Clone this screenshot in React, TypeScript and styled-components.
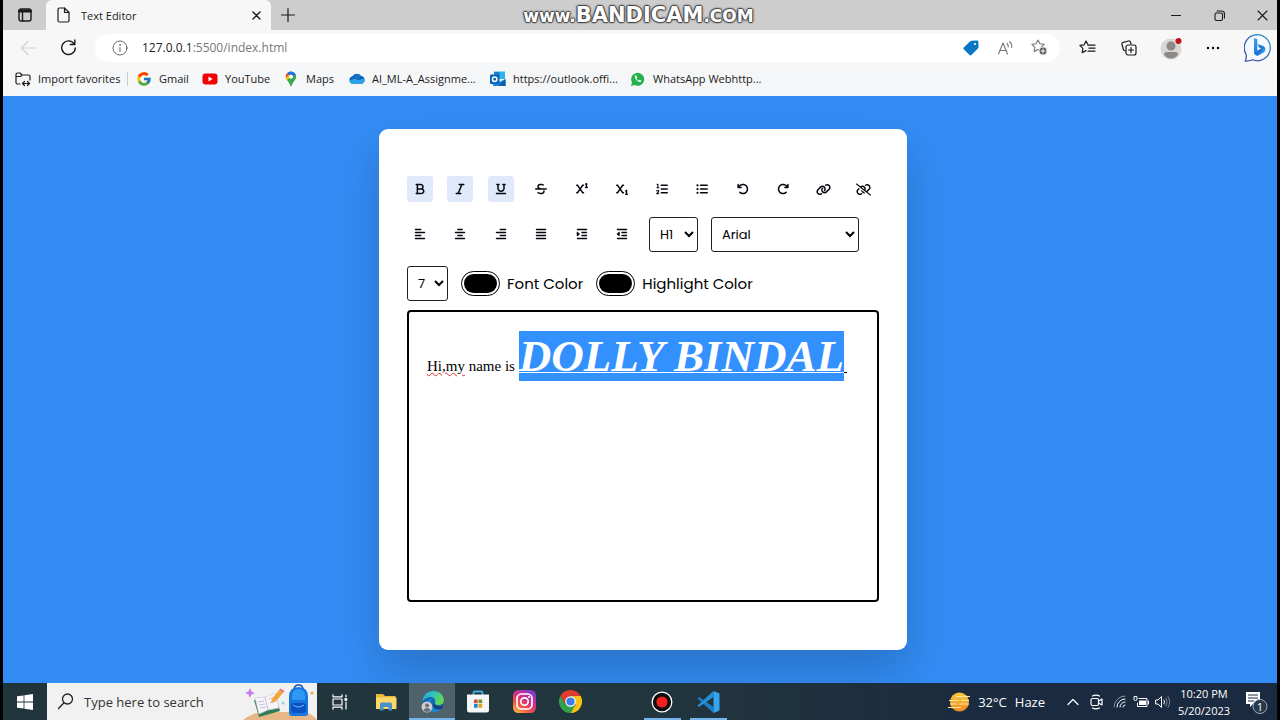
import React from "react";
import styled, { createGlobalStyle } from "styled-components";
import {
  FaBold, FaItalic, FaUnderline, FaStrikethrough, FaSuperscript, FaSubscript,
  FaListOl, FaListUl, FaArrowRotateLeft, FaArrowRotateRight, FaLink, FaLinkSlash,
  FaAlignLeft, FaAlignCenter, FaAlignRight, FaAlignJustify, FaIndent, FaOutdent,
} from "react-icons/fa6";
import { FcGoogle } from "react-icons/fc";

const ui = `"Open Sans", "Noto Sans", sans-serif`;
const rounded = `Poppins, Lato, "Open Sans", sans-serif`;

const Global = createGlobalStyle`
  *, *::before, *::after { box-sizing: border-box; }
  body { margin: 0; background: #000; font-family: ${ui}; color: #1b1b1b; }
  button { border: 0; padding: 0; background: none; color: inherit; font: inherit; cursor: pointer; }
  svg { display: block; flex: none; }
`;

const Screen = styled.div`
  min-height: 100vh;
  padding: 0 3px;
  display: flex;
  flex-direction: column;
`;

/* ---------- browser ---------- */

const TabStrip = styled.div`
  position: relative;
  height: 30px;
  display: flex;
  background: #cdcdcd;
`;

const IconButton = styled.button<{ $w: number; $end?: boolean }>`
  width: ${(p) => p.$w}px;
  flex: none;
  display: flex;
  align-items: center;
  justify-content: ${(p) => (p.$end ? "flex-end" : "center")};
`;

const Tab = styled.div`
  width: 225px;
  padding: 0 8px 0 11px;
  display: flex;
  align-items: center;
  gap: 11px;
  background: #f7f7f7;
  border-radius: 6px 6px 0 0;
  font-size: 11px;
`;

const TabTitle = styled.span`
  flex: 1;
`;

const WindowControls = styled.div`
  margin-left: auto;
  display: flex;
  gap: 13px;
`;

const Watermark = styled.div`
  position: absolute;
  top: 2px;
  left: 0;
  right: 3px;
  text-align: center;
  pointer-events: none;
  font: bold 17px/26px "DejaVu Sans", sans-serif;
  color: #fff;
  text-shadow: 1px 0 1px #444, -1px 0 1px #444, 0 1px 1px #444, 0 -1px 1px #444, 0 0 3px #444;
`;

const WatermarkName = styled.span`
  font-size: 21px;
`;

const AddressRow = styled.div`
  height: 35px;
  display: flex;
  align-items: center;
  padding: 0 4px;
  background: #f7f7f7;
`;

const AddressPill = styled.form`
  flex: 1;
  height: 28px;
  margin: 0 6px;
  padding: 0 4px 0 17px;
  display: flex;
  align-items: center;
  background: #fff;
  border-radius: 14px;
`;

const Address = styled.div`
  flex: 1;
  margin-left: 14px;
  font-size: 12px;
  line-height: 20px;
  color: #777;
  outline: 0;
`;

const Host = styled.span`
  color: #222;
`;

const Favorites = styled.nav`
  height: 31px;
  padding: 0 12px 4px;
  display: flex;
  align-items: center;
  gap: 15px;
  background: #f5f6f7;
`;

const Favorite = styled.a<{ $w: number; $divided?: boolean }>`
  width: ${(p) => p.$w}px;
  height: 16px;
  display: flex;
  align-items: center;
  gap: 7px;
  position: relative;
  font-size: 11px;
  line-height: 16px;
  white-space: nowrap;
  color: #1b1b1b;
  text-decoration: none;

  &::after {
    content: "";
    display: ${(p) => (p.$divided ? "block" : "none")};
    position: absolute;
    right: -7px;
    width: 1px;
    height: 14px;
    background: #ccc;
  }
`;

/* ---------- editor page ---------- */

const Page = styled.main`
  flex: 1;
  padding: 32px 0 32px 6px;
  display: flex;
  align-items: center;
  justify-content: center;
  background: #338cf4;
`;

const Card = styled.section`
  width: 528px;
  max-width: 100%;
  padding: 47px 28px 48px;
  background: #fff;
  border-radius: 9px;
  box-shadow: 0 22px 45px rgba(7, 20, 35, 0.2);
`;

const Toolbar = styled.div`
  padding-right: 2px;
  margin-bottom: 9px;
  display: grid;
  grid-template-columns: 1fr 1fr;
  gap: 14px;
  align-items: center;
`;

const ToolGroup = styled.div`
  height: 27px;
  display: flex;
  justify-content: space-between;
`;

const Fields = styled.div<{ $wide?: boolean }>`
  grid-column: ${(p) => (p.$wide ? "1 / -1" : "auto")};
  display: flex;
  align-items: center;
  gap: 13px;
`;

const Tool = styled.button<{ $active?: boolean }>`
  width: 26px;
  height: 26px;
  display: flex;
  align-items: center;
  justify-content: center;
  border-radius: 3px;
  font-size: 12px;
  color: #05070f;
  background: ${(p) => (p.$active ? "#e0e9fb" : "transparent")};
`;

const LinkIcon = styled(FaLink)`
  font-size: 15px;
`;

const UnlinkIcon = styled(FaLinkSlash)`
  font-size: 15px;
`;

const Select = styled.select<{ $w: number }>`
  width: ${(p) => p.$w}px;
  height: 35px;
  padding: 6px;
  border: 1px solid #222;
  border-radius: 3px;
  background: #fff;
  color: #000;
  font: 13px ${rounded};
`;

const ColorField = styled.label`
  display: flex;
  align-items: center;
  gap: 7px;
  font: 15px/24px ${rounded};
  color: #000;
`;

const ColorInput = styled.input`
  appearance: none;
  width: 39px;
  height: 25px;
  padding: 0;
  border: 1px solid #000;
  border-radius: 13px;
  background: none;

  &::-webkit-color-swatch-wrapper { padding: 2px; }
  &::-webkit-color-swatch { border: 0; border-radius: 10px; }
`;

const Document = styled.div`
  min-height: 292px;
  padding: 18px;
  border: 2px solid #000;
  border-radius: 4px;
  outline: 0;
  font: 15px "Liberation Serif", serif;
  color: #000;
`;

const Misspelt = styled.span`
  text-decoration: underline wavy #e03030 1px;
  text-underline-offset: 1px;
`;

const Selected = styled.span`
  background: #3390ff;
  color: #fff;
  font-size: 45px;
  font-weight: bold;
  font-style: italic;
  text-decoration: underline 1px;
  text-underline-offset: 1px;
`;

const Trailing = styled.u`
  font-size: 12px;
`;

/* ---------- taskbar ---------- */

const Taskbar = styled.footer`
  height: 37px;
  display: flex;
  background: linear-gradient(90deg, #20343c 0%, #22363e 50%, #1a2a40 80%);
  color: #fff;
`;

const Search = styled.label`
  width: 270px;
  padding-left: 10px;
  display: flex;
  align-items: center;
  gap: 10px;
  background: #f1f1f1;
  color: #222;
`;

const SearchInput = styled.input`
  flex: 1;
  min-width: 0;
  padding: 0;
  border: 0;
  outline: 0;
  background: none;
  font: 13px ${ui};

  &::placeholder { color: #333; opacity: 1; }
`;

const AppButton = styled.button<{ $active?: boolean; $running?: boolean }>`
  width: 46px;
  display: flex;
  align-items: center;
  justify-content: center;
  background: ${(p) => (p.$active ? "#4f626c" : "transparent")};
  position: relative;

  &::after {
    content: "";
    display: ${(p) => (p.$active || p.$running ? "block" : "none")};
    position: absolute;
    bottom: 0;
    left: ${(p) => (p.$active ? 0 : 5)}px;
    right: ${(p) => (p.$active ? 0 : 4)}px;
    height: 2px;
    background: #76b5ec;
  }
`;

const AppGap = styled.div`
  width: 46px;
`;

const Tray = styled.div`
  margin-left: auto;
  padding-right: 5px;
  display: flex;
  align-items: center;
`;

const Weather = styled.div`
  margin-right: 17px;
  display: flex;
  align-items: center;
  gap: 8px;
  font-size: 13px;
`;

const Clock = styled.time`
  width: 60px;
  margin-right: 6px;
  text-align: center;
  font-size: 11px;
  line-height: 17px;
  white-space: nowrap;
`;

/* ---------- drawings ---------- */

type LineProps = { w: number; h?: number; sw?: number; color?: string; children: React.ReactNode };
const Line = ({ w, h = w, sw = 1, color = "currentColor", children }: LineProps) => (
  <svg width={w} height={h} viewBox={`0 0 ${w} ${h}`} fill="none" stroke={color} strokeWidth={sw} strokeLinecap="round" strokeLinejoin="round" aria-hidden>
    {children}
  </svg>
);

const TabActions = () => (
  <Line w={14} sw={1.4}>
    <rect x="1" y="1" width="12" height="12" rx="2" />
    <path d="M1.5 3h11" strokeWidth="3" />
    <path d="M4.5 4v9" />
  </Line>
);
const PageIcon = () => (
  <Line w={13} h={16} sw={1.2}>
    <path d="M2.5 1h5L12 5.500V13.500a1.500 1.500 0 0 1-1.500 1.500h-8A1.500 1.500 0 0 1 1 13.500v-11A1.500 1.500 0 0 1 2.500 1z" />
    <path d="M7.500 1v4.500H12" />
  </Line>
);
const CloseIcon = ({ s = 11, sw = 1.1 }: { s?: number; sw?: number }) => (
  <Line w={s} sw={sw}><path d={`M1 1L${s - 1} ${s - 1}M${s - 1} 1L1 ${s - 1}`} /></Line>
);
const PlusIcon = () => <Line w={14} sw={1.2}><path d="M7 .6v12.800M.6 7h12.800" /></Line>;
const MinIcon = () => <Line w={10} sw={1.1}><path d="M.5 5.500h9" /></Line>;
const RestoreIcon = () => (
  <Line w={11} sw={1.1}>
    <rect x="1" y="3" width="7.500" height="7.500" rx="1.500" />
    <path d="M3 1h4.500a3 3 0 0 1 3 3v4" />
  </Line>
);
const BackIcon = () => <Line w={16} color="#cfcfcf" sw={1.2}><path d="M15 8H1.500M8 1.500L1.500 8 8 14.500" /></Line>;
const RefreshIcon = () => (
  <Line w={17} sw={1.4}>
    <path d="M14.200 5A6.800 6.800 0 1 0 15.300 9" />
    <path d="M14.800 1v4.500h-4.500" />
  </Line>
);
const InfoIcon = () => (
  <Line w={16} color="#666">
    <circle cx="8" cy="8" r="7" /><path d="M8 7.500v4" /><circle cx="8" cy="5" r=".4" />
  </Line>
);
const TagIcon = () => (
  <svg width="16" height="16" viewBox="0 0 16 16" aria-hidden>
    <path d="M8.500.8L14 .6a1.400 1.400 0 0 1 1.400 1.400L15.500 7a2 2 0 0 1-.6 1.400L8.600 14.800a1.600 1.600 0 0 1-2.300 0L1 9.600a1.600 1.600 0 0 1 0-2.300L7 1.400A2 2 0 0 1 8.500.8z" fill="#0b76c5" />
    <circle cx="12" cy="4" r="1.100" fill="#fff" />
  </svg>
);
const ReadAloud = () => (
  <Line w={16} color="#777" sw={1.1}>
    <path d="M1.500 14L6 3l4.500 11M3 10.500h6M10 3.500q1.500 1.500 1.300 3.500M12.500 1.500q2.800 2.500 2.300 6" />
  </Line>
);
const StarAdd = () => (
  <Line w={17} color="#777" sw={1.1}>
    <path d="M7 1l1.900 3.800 4.200.6-3 3 .7 4.200L7 10.600l-3.800 2 .7-4.200-3-3 4.200-.6z" />
    <circle cx="12" cy="12" r="4" fill="#555" stroke="#fff" strokeWidth=".8" />
    <path d="M12 10v4M10 12h4" stroke="#fff" />
  </Line>
);
const StarList = () => (
  <Line w={17} h={15} sw={1.2}>
    <path d="M9 4.800L7 1 5.100 4.800l-4.200.6 3 3-.7 4.200L7 10.600M9 5.200h7M10 8.200h6M9 11.200h7" />
  </Line>
);
const Collections = () => (
  <Line w={16} sw={1.2}>
    <path d="M4 10.800L2.500 10 1 4.500A1.800 1.800 0 0 1 2.200 2.300L7.500 1a1.800 1.800 0 0 1 2 1.200L10 4" />
    <rect x="5" y="5" width="10" height="10" rx="2" /><path d="M10 7.500v5M7.500 10h5" />
  </Line>
);
const Avatar = () => (
  <svg width="22" height="24" viewBox="0 0 22 24" aria-hidden>
    <circle cx="11" cy="13" r="10.500" fill="#d9d7d5" />
    <circle cx="11" cy="10" r="4.500" fill="#8d8986" />
    <path d="M4 18.500q0-2.500 3-2.500h8q3 0 3 2.500-2.500 4-7 4t-7-4z" fill="#8d8986" />
    <circle cx="18.500" cy="5" r="3" fill="#c4101f" />
  </svg>
);
const Dots = () => (
  <svg width="14" height="4" viewBox="0 0 14 4" aria-hidden>
    <circle cx="2" cy="2" r="1.200" /><circle cx="7" cy="2" r="1.200" /><circle cx="12" cy="2" r="1.200" />
  </svg>
);
const Bing = () => (
  <svg width="29" height="29" viewBox="0 0 29 29" aria-hidden>
    <defs>
      <linearGradient id="bub" x1="0" y1="1" x2="1" y2="0"><stop stopColor="#3b3d9a" /><stop offset="1" stopColor="#2997c8" /></linearGradient>
      <linearGradient id="bing" x1="0" y1="0" x2="1" y2="1"><stop stopColor="#3aa5ee" /><stop offset=".6" stopColor="#1d74d8" /><stop offset="1" stopColor="#3fc8e8" /></linearGradient>
    </defs>
    <path d="M1.200 28q1.500-3 1-6.500A13 13 0 1 1 8.500 26.800Q5 28.200 1.200 28z" fill="#f4faff" stroke="url(#bub)" strokeWidth="1.200" />
    <path d="M10 5l3.300 1.300v11.500l3.700-2.300-2-1-1.300-3.500 6 2.200q1.800 1 1.800 3t-1.800 3.300l-6.400 3.500-3.300-2z" fill="url(#bing)" />
  </svg>
);
const ImportIcon = () => (
  <Line w={16} sw={1.2}>
    <path d="M5 13H2.500A1.500 1.500 0 0 1 1 11.500v-8A1.500 1.500 0 0 1 2.500 2H5l2 2h6.500A1.500 1.500 0 0 1 15 5.500V9M1 5.500h4.500L7 4M7.500 12.500h7M9.500 10.500l-2 2 2 2M12.500 10.500l2 2-2 2" />
  </Line>
);
const YouTube = () => (
  <svg width="16" height="16" viewBox="0 0 16 16" aria-hidden>
    <rect x=".5" y="2.500" width="15" height="11" rx="3" fill="#f00000" /><path d="M6.500 5.500v5l4.200-2.500z" fill="#fff" />
  </svg>
);
const MapsPin = () => (
  <svg width="16" height="16" viewBox="0 0 16 16" aria-hidden>
    <defs><clipPath id="pin"><path d="M8 .5a5.200 5.200 0 0 1 5.200 5.200c0 3.500-3.700 5-4.500 9q-.7 1.500-1.400 0c-.8-4-4.500-5.500-4.500-9A5.200 5.200 0 0 1 8 .5z" /></clipPath></defs>
    <g clipPath="url(#pin)">
      <path fill="#34a853" d="M0 0h16v16H0z" />
      <path fill="#fbbc04" d="M0 13l10-9-4-2-6 6z" />
      <path fill="#ea4335" d="M0 9l8-7H0z" />
      <path fill="#1a73e8" d="M3 0l10 0 1 3-6 3z" />
    </g>
    <circle cx="8" cy="5.700" r="2" fill="#fff" />
  </svg>
);
const OneDrive = () => (
  <svg width="16" height="16" viewBox="0 0 16 16" aria-hidden>
    <path d="M4 12.800a3.800 3.800 0 0 1-.5-7.500 5 5 0 0 1 8.500-.2 4 4 0 0 1 1 7.700z" fill="#0f5fb5" />
    <path d="M3.500 12.800Q.8 12.500.5 9.500l5-2 4 1.500 6-1.500q1 4-2 5.300z" fill="#2ba3ea" />
    <path d="M6 4q4-2.500 6.500 1.500l-4 3-5-3z" fill="#0c74cf" />
  </svg>
);
const Outlook = () => (
  <svg width="16" height="16" viewBox="0 0 16 16" aria-hidden>
    <path d="M4 .5h11V8H4z" fill="#2fb4f0" /><path d="M4 1h5.500v4H4z" fill="#1383cf" />
    <path d="M3 8l6 3 6.500-3v7H3z" fill="#1789d8" /><path d="M8 15l7.500-7v7z" fill="#0d5ea8" />
    <rect x="0" y="3.500" width="9.500" height="9.500" rx="1" fill="#0b63b5" />
    <circle cx="4.700" cy="8.200" r="2.200" fill="none" stroke="#fff" strokeWidth="1.500" />
  </svg>
);
const WhatsApp = () => (
  <svg width="16" height="16" viewBox="0 0 16 16" aria-hidden>
    <path d="M1 15l1-3.500A6.500 6.500 0 1 1 4.500 14z" fill="#25b04b" />
    <path d="M5.500 4.500q-1 .5-.6 2 1.500 3.800 5 4.600 1.400-.1 1.500-1.400l-1.700-.9-1 .9Q7.300 9 6.500 7.200l.7-.8-.7-1.800z" fill="#fff" />
  </svg>
);

const Windows = () => (
  <svg width="16" height="16" viewBox="0 0 16 16" fill="#fff" aria-hidden>
    <path d="M0 2.300L6.600 1.400v6.200H0zM7.400 1.300L16 0v7.600H7.400zM0 8.400h6.600v6.200L0 13.700zM7.400 8.400H16V16l-8.600-1.300z" />
  </svg>
);
const SearchIcon = () => <Line w={17} sw={1.3}><circle cx="10.500" cy="6" r="5" /><path d="M7 9.800L1.500 15.500" /></Line>;
const SchoolArt = () => (
  <svg width="74" height="37" viewBox="0 0 74 37" aria-hidden>
    <path d="M0 37q8-7 20-8h40q9 1 14 8z" fill="#e6b887" />
    <path d="M7 5l1.500 3.500L12 10l-3.500 1.500L7 15l-1.500-3.500L2 10l3.500-1.500z" fill="#c77be8" />
    <path d="M11 17l22-5 4 16-21 6z" fill="#2f7d56" />
    <path d="M12 15l10-1 11-4 3 15-11 2-9 4z" fill="#f7f5f8" stroke="#cfc8d8" strokeWidth=".6" />
    <path d="M22 14l3 13M15 19l6-1M16 22l6-1M17 25l6-1M26 16l6-2M27 20l6-2" stroke="#b9aec9" strokeWidth=".8" />
    <path d="M28 20l1-4 7-9 4 3-7 8z" fill="#f6a53b" /><path d="M36 7l1.500-1.500 4 2.500-1.500 2z" fill="#ef7478" />
    <circle cx="40" cy="20" r="1.600" fill="#8fd5d9" /><circle cx="69" cy="10" r="1.500" fill="#f2a93c" />
    <path d="M51 7q0-5 4.500-5T60 7" fill="none" stroke="#174fae" strokeWidth="1.500" />
    <path d="M46 14q0-10 9.500-10T65 14v16q0 3-3 3H49q-3 0-3-3z" fill="#1775e0" />
    <path d="M49 12q1-6 6.500-6T62 12v5H49z" fill="#2f98f4" />
    <rect x="48" y="20" width="15" height="10" rx="3" fill="#0d50c4" /><path d="M50 22q5 4 11 0" stroke="#67c2ff" fill="none" />
  </svg>
);
const TaskView = () => (
  <Line w={16} sw={1.2}>
    <path d="M1 .8v2h9v-2M1 15.200v-2h9v2M14 1v2M14 8v7" /><rect x="1" y="5" width="9" height="6" />
    <rect x="13" y="4.500" width="2" height="2" fill="#fff" strokeWidth=".6" />
  </Line>
);
const Explorer = () => (
  <svg width="22" height="18" viewBox="0 0 22 18" aria-hidden>
    <path d="M1 1h7l2 2h10.500v13H1z" fill="#e9b93b" /><path d="M1 4.500h20.500V16H1z" fill="#fbd968" />
    <path d="M5 17.500V11q0-1.500 1.500-1.500h9q1.500 0 1.500 1.500v6.500h-3.500V14h-5v3.500z" fill="#4a90c9" />
  </svg>
);
const Edge = () => (
  <svg width="25" height="23" viewBox="0 0 25 23" aria-hidden>
    <defs>
      <linearGradient id="e1" x1="0" y1="0" x2="1" y2=".4"><stop stopColor="#2ba5e6" /><stop offset=".55" stopColor="#35c3b4" /><stop offset="1" stopColor="#62d84e" /></linearGradient>
    </defs>
    <circle cx="13" cy="11.500" r="10.500" fill="#1565b4" />
    <path d="M2.500 11Q4 1 13 1q9.500 0 11 9-.2 5-5.500 5-5 0-3.500-2.500 1-3-2-5-5-2-10.500 3.500z" fill="url(#e1)" />
    <path d="M12 9q-4 5 1 9 5 3 9 .5-4 4-9.500 3.500-6-1-6-7T12 9z" fill="#1c86d1" />
    <path d="M15 13q-.5 3 4 3.500 3 0 4.500-2-.5 3-2 4.500-5 1-8-2-1-2.500 1.500-4z" fill="#123f78" />
    <circle cx="7" cy="17" r="5.500" fill="#c9cdd1" /><circle cx="7" cy="15.500" r="2" fill="#6c6f74" /><path d="M3.500 20.500q.5-2.500 3.500-2.500t3.500 2.500q-3.500 3-7 0z" fill="#6c6f74" />
  </svg>
);
const Store = () => (
  <svg width="22" height="23" viewBox="0 0 22 23" aria-hidden>
    <path d="M6.500 5V2.500q0-1 1-1h7q1 0 1 1V5" stroke="#3fa9e8" strokeWidth="1.800" fill="none" />
    <path d="M0 4.500h22V20q0 2.500-2.500 2.500h-17Q0 22.500 0 20z" fill="#f5f6f7" />
    <path fill="#d8502f" d="M7 9.500h3.700v3.700H7z" /><path fill="#6d9e2c" d="M11.500 9.500h3.700v3.700h-3.700z" />
    <path fill="#2186cf" d="M7 14h3.700v3.700H7z" /><path fill="#e2a11d" d="M11.500 14h3.700v3.700h-3.700z" />
  </svg>
);
const Instagram = () => (
  <svg width="23" height="23" viewBox="0 0 23 23" fill="none" aria-hidden>
    <defs><linearGradient id="ig" x1=".1" y1="1" x2=".8" y2="0"><stop stopColor="#fdc04f" /><stop offset=".3" stopColor="#f5593d" /><stop offset=".6" stopColor="#d42f86" /><stop offset="1" stopColor="#7b3bd0" /></linearGradient></defs>
    <rect width="23" height="23" rx="5.500" fill="url(#ig)" />
    <rect x="4" y="4" width="15" height="15" rx="4.500" stroke="#fff" strokeWidth="1.700" />
    <circle cx="11.500" cy="11.500" r="3.700" stroke="#fff" strokeWidth="1.700" /><circle cx="16" cy="7" r="1" fill="#fff" />
  </svg>
);
const Chrome = () => (
  <svg width="23" height="23" viewBox="0 0 24 24" aria-hidden>
    <path d="M12 6h10.400A12 12 0 0 1 12 24l5.200-9z" fill="#fbc117" />
    <path d="M6.800 15L1.600 6A12 12 0 0 0 12 24l5.200-9z" fill="#2fa24c" />
    <path d="M1.600 6l5.200 9L12 6h10.400A12 12 0 0 0 1.600 6z" fill="#e33b2e" />
    <circle cx="12" cy="12" r="5.500" fill="#fff" /><circle cx="12" cy="12" r="4.300" fill="#3b7de9" />
  </svg>
);
const Record = () => (
  <svg width="22" height="22" viewBox="0 0 22 22" aria-hidden>
    <circle cx="11" cy="11" r="9.800" fill="#0d0d0d" stroke="#fff" strokeWidth="1.300" /><circle cx="11" cy="11" r="5.600" fill="#f4201d" />
  </svg>
);
const VSCode = () => (
  <svg width="23" height="22" viewBox="0 0 23 22" aria-hidden>
    <path d="M2 6L.5 7.500 16.500 22V16z" fill="#1c7fc4" /><path d="M2 16L.5 14.500 16.500 0V6z" fill="#2690d6" />
    <path d="M16.500 0L22.500 2.500v17L16.500 22z" fill="#35a6ee" />
  </svg>
);
const Haze = () => (
  <svg width="22" height="20" viewBox="0 0 22 20" aria-hidden>
    <defs><linearGradient id="sun" x1="0" y1="0" x2="0" y2="1"><stop stopColor="#fbc93c" /><stop offset="1" stopColor="#ef8a1e" /></linearGradient></defs>
    <circle cx="11.500" cy="10" r="9.500" fill="url(#sun)" />
    <path d="M8 4.500h14M1 8.500h10M13 8.500h8M2 12h7M11 12h10M0 15.500h13" stroke="#ffe7a8" strokeWidth="1.200" />
  </svg>
);
const Chevron = () => <Line w={12} h={8} sw={1.2}><path d="M1 6.500l5-5 5 5" /></Line>;
const MeetNow = () => (
  <Line w={13} h={16} sw={1.2}><rect x="1" y="4.500" width="7.500" height="7" rx="1.500" /><path d="M8.500 7L12 5v6L8.500 9M2.500 2Q6 .2 9.500 2M2.500 14q3.500 1.800 7 0" /></Line>
);
const Wifi = () => (
  <Line w={13}>
    <path d="M1 12A11 11 0 0 1 12 1" stroke="#8b96a3" /><path d="M4 12a8 8 0 0 1 8-8M7 12a5 5 0 0 1 5-5M10 12a2 2 0 0 1 2-2" />
  </Line>
);
const Battery = () => (
  <Line w={16} h={12}><rect x="6" y="4.500" width="7" height="4.500" fill="#fff" stroke="none" /><path d="M6 2.500h8v8H4.500V7M15.500 5v3M1 1v2q0 1.500 1.500 1.500T4 3V1z" /></Line>
);
const Speaker = () => (
  <Line w={16} h={14}><path d="M1 5h2l3.500-3.500v11L3 9H1z" /><path d="M9 5q1.200 2 0 4" /><path d="M11 3q2.600 4 0 8M13 1.500q3.600 5.500 0 11" stroke="#7c8896" /></Line>
);
const Notifications = () => (
  <svg width="23" height="24" viewBox="0 0 23 24" aria-hidden>
    <path d="M1 2h14v12H8l-3 3v-3H1z" fill="#fff" /><path d="M3 5h10M3 8h10M3 11h6" stroke="#1b2b40" />
    <circle cx="15" cy="16.500" r="7" fill="#27384b" stroke="#a3acb5" />
    <text x="15" y="20.500" textAnchor="middle" fill="#fff" fontFamily="Open Sans, sans-serif" fontSize="11">1</text>
  </svg>
);

/* ---------- data ---------- */

const favorites = [
  { label: "Import favorites", icon: <ImportIcon />, w: 106, divided: true },
  { label: "Gmail", icon: <FcGoogle size={16} />, w: 51 },
  { label: "YouTube", icon: <YouTube />, w: 66 },
  { label: "Maps", icon: <MapsPin />, w: 51 },
  { label: "AI_ML-A_Assignme...", icon: <OneDrive />, w: 126 },
  { label: "https://outlook.offi...", icon: <Outlook />, w: 125 },
  { label: "WhatsApp Webhttp...", icon: <WhatsApp />, w: 130 },
];

const toolGroups = [
  [["Bold", FaBold, true], ["Italic", FaItalic, true], ["Underline", FaUnderline, true], ["Strikethrough", FaStrikethrough], ["Superscript", FaSuperscript], ["Subscript", FaSubscript]],
  [["Numbered list", FaListOl], ["Bulleted list", FaListUl], ["Undo", FaArrowRotateLeft], ["Redo", FaArrowRotateRight], ["Link", LinkIcon], ["Unlink", UnlinkIcon]],
  [["Align left", FaAlignLeft], ["Align center", FaAlignCenter], ["Align right", FaAlignRight], ["Justify", FaAlignJustify], ["Indent", FaIndent], ["Outdent", FaOutdent]],
] as [string, React.ComponentType, boolean?][][];

export default function App() {
  return (
    <Screen>
      <Global />
      <TabStrip>
        <IconButton $w={43} aria-label="Tab actions"><TabActions /></IconButton>
        <Tab>
          <PageIcon />
          <TabTitle>Text Editor</TabTitle>
          <IconButton $w={14} aria-label="Close tab"><CloseIcon s={9} sw={1.4} /></IconButton>
        </Tab>
        <IconButton $w={33} aria-label="New tab"><PlusIcon /></IconButton>
        <Watermark>www.<WatermarkName>BANDICAM</WatermarkName>.COM</Watermark>
        <WindowControls>
          <IconButton $w={30} aria-label="Minimize"><MinIcon /></IconButton>
          <IconButton $w={30} aria-label="Restore"><RestoreIcon /></IconButton>
          <IconButton $w={30} aria-label="Close"><CloseIcon /></IconButton>
        </WindowControls>
      </TabStrip>
      <AddressRow>
        <IconButton $w={41} aria-label="Back"><BackIcon /></IconButton>
        <IconButton $w={41} aria-label="Refresh"><RefreshIcon /></IconButton>
        <AddressPill>
          <InfoIcon />
          <Address role="textbox" aria-label="Address" contentEditable suppressContentEditableWarning spellCheck={false}>
            <Host>127.0.0.1</Host>:5500/index.html
          </Address>
          <IconButton $w={34} type="button" aria-label="Shopping"><TagIcon /></IconButton>
          <IconButton $w={34} type="button" aria-label="Read aloud"><ReadAloud /></IconButton>
          <IconButton $w={34} type="button" aria-label="Add to favorites"><StarAdd /></IconButton>
        </AddressPill>
        <IconButton $w={42} aria-label="Favorites"><StarList /></IconButton>
        <IconButton $w={42} aria-label="Collections"><Collections /></IconButton>
        <IconButton $w={42} aria-label="Profile"><Avatar /></IconButton>
        <IconButton $w={42} aria-label="Menu"><Dots /></IconButton>
        <IconButton $w={39} $end aria-label="Bing"><Bing /></IconButton>
      </AddressRow>
      <Favorites>
        {favorites.map((f) => (
          <Favorite key={f.label} href="#" $w={f.w} $divided={f.divided}>
            {f.icon}
            {f.label}
          </Favorite>
        ))}
      </Favorites>

      <Page>
        <Card>
          <Toolbar>
            {toolGroups.map((group, i) => (
              <ToolGroup key={i}>
                {group.map(([label, Icon, active]) => (
                  <Tool key={label} aria-label={label} aria-pressed={!!active} $active={active}><Icon /></Tool>
                ))}
              </ToolGroup>
            ))}
            <Fields>
              <Select $w={49} aria-label="Heading"><option>H1</option></Select>
              <Select $w={148} aria-label="Font"><option>Arial</option></Select>
            </Fields>
            <Fields $wide>
              <Select $w={41} aria-label="Font size"><option>7</option></Select>
              <ColorField><ColorInput type="color" defaultValue="#000000" />Font Color</ColorField>
              <ColorField><ColorInput type="color" defaultValue="#000000" />Highlight Color</ColorField>
            </Fields>
          </Toolbar>
          <Document role="textbox" aria-label="Document" contentEditable suppressContentEditableWarning spellCheck={false}>
            <Misspelt>Hi,my</Misspelt> name is <Selected>DOLLY BINDAL</Selected><Trailing>&nbsp;</Trailing>
          </Document>
        </Card>
      </Page>

      <Taskbar>
        <IconButton $w={44} aria-label="Start"><Windows /></IconButton>
        <Search>
          <SearchIcon />
          <SearchInput placeholder="Type here to search" aria-label="Search" />
          <SchoolArt />
        </Search>
        <AppButton aria-label="Task view"><TaskView /></AppButton>
        <AppButton aria-label="File Explorer"><Explorer /></AppButton>
        <AppButton aria-label="Edge" $active><Edge /></AppButton>
        <AppButton aria-label="Store"><Store /></AppButton>
        <AppButton aria-label="Instagram"><Instagram /></AppButton>
        <AppButton aria-label="Chrome"><Chrome /></AppButton>
        <AppGap />
        <AppButton aria-label="Recorder" $running><Record /></AppButton>
        <AppButton aria-label="Visual Studio Code" $running><VSCode /></AppButton>
        <Tray>
          <Weather><Haze /><span>32°C</span><span>Haze</span></Weather>
          <IconButton $w={22} aria-label="Show hidden icons"><Chevron /></IconButton>
          <IconButton $w={24} aria-label="Meet now"><MeetNow /></IconButton>
          <IconButton $w={22} aria-label="Network"><Wifi /></IconButton>
          <IconButton $w={22} aria-label="Battery"><Battery /></IconButton>
          <IconButton $w={22} aria-label="Volume"><Speaker /></IconButton>
          <Clock>10:20 PM<br />5/20/2023</Clock>
          <IconButton $w={32} aria-label="Notifications"><Notifications /></IconButton>
        </Tray>
      </Taskbar>
    </Screen>
  );
}
